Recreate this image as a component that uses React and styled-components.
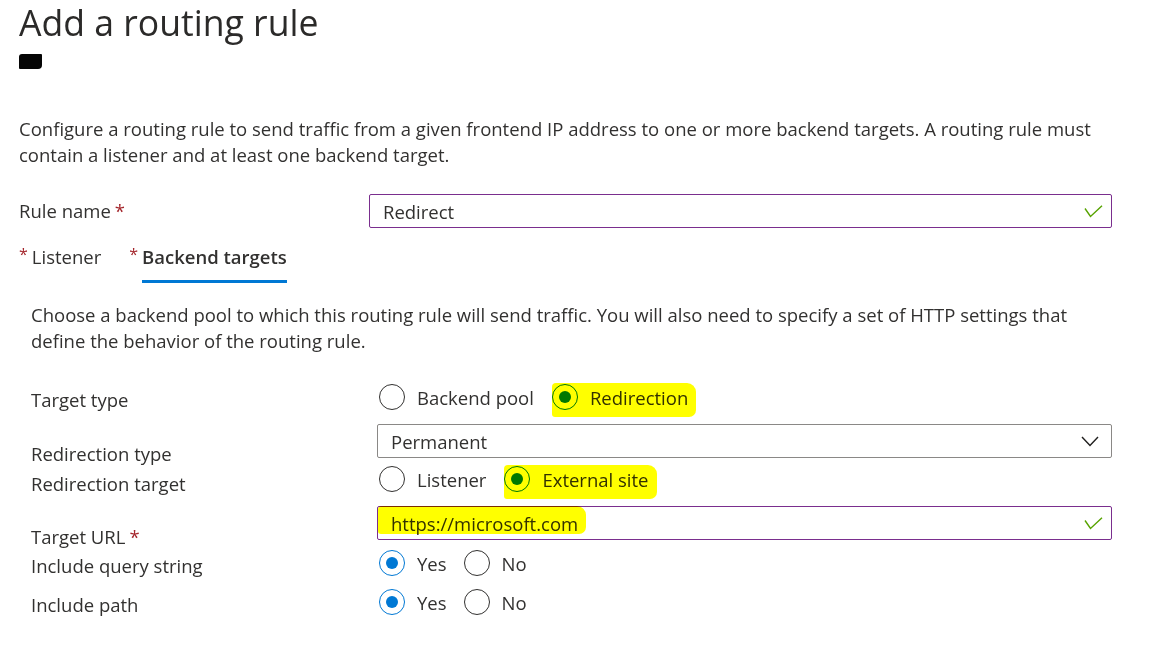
import React from 'react'
import styled, { createGlobalStyle } from 'styled-components'

const GlobalStyle = createGlobalStyle`
  body {
    margin: 0;
    background: #ffffff;
    font-family: "Open Sans", "Noto Sans", "Liberation Sans", sans-serif;
    color: #323130;
  }
`

const Page = styled.div`
  width: 1093px;
  padding: 0 0 0 19px;
`

const Title = styled.h1`
  margin: 0;
  font-size: 35.6px;
  line-height: 44px;
  font-weight: 400;
  color: #2b2a29;
`

const Redacted = styled.div`
  width: 23px;
  height: 15px;
  margin-top: 10px;
  background: #050505;
  border-radius: 3px 1px 4px 1px;
`

const Text = styled.p`
  margin: ${(p) => p.$top}px 0 0;
  font-size: 18.5px;
  line-height: 26px;
  white-space: nowrap;
`

const FieldRow = styled.div`
  display: grid;
  grid-template-columns: ${(p) => p.$label}px 1fr;
  align-items: center;
  margin-top: ${(p) => p.$top}px;
`

const Label = styled.div`
  font-size: 18.5px;
  line-height: 26px;
  margin-top: ${(p) => p.$top || 0}px;
`

const Required = styled.span`
  color: #a4262c;
  padding-left: 4px;
`

const Input = styled.div`
  position: relative;
  display: flex;
  align-items: center;
  justify-content: space-between;
  height: 34px;
  box-sizing: border-box;
  margin-top: ${(p) => p.$top || 0}px;
  border: 1px solid ${(p) => (p.$valid ? '#7a2e8e' : '#8a8886')};
  border-radius: 2px;
  padding: 0 ${(p) => p.$pr}px 0 ${(p) => p.$pl}px;
  font-size: 18.5px;
`

const Tabs = styled.div`
  display: flex;
  gap: 28px;
  margin-top: 16px;
  font-size: 18.5px;
  line-height: 26px;
`

const Tab = styled.div`
  display: flex;
  align-items: flex-start;
`

const TabStar = styled.span`
  color: #a4262c;
  font-size: 16px;
  line-height: 20px;
  padding-right: 4px;
`

const TabText = styled.span`
  font-weight: ${(p) => (p.$active ? 600 : 400)};
  padding-bottom: 10px;
  border-bottom: 3px solid ${(p) => (p.$active ? '#0078d4' : 'transparent')};
`

const Section = styled.div`
  padding-left: 12px;
`

const Form = styled.div`
  display: grid;
  grid-template-columns: 346px 1fr;
  margin-top: 30px;
`

const Labels = styled.div`
  display: flex;
  flex-direction: column;
  padding-top: 3px;
`

const Controls = styled.div`
  display: flex;
  flex-direction: column;
`

const Group = styled.div`
  display: flex;
  align-items: center;
  gap: ${(p) => p.$gap || 18}px;
  height: 26px;
  padding-left: 2px;
  margin-top: ${(p) => p.$top || 0}px;
`

const Option = styled.label`
  position: relative;
  display: flex;
  align-items: center;
  gap: 12px;
  font-size: 18.5px;
`

const Circle = styled.span`
  position: relative;
  width: 26px;
  height: 26px;
  box-sizing: border-box;
  border-radius: 50%;
  border: 1px solid ${(p) => (p.$checked ? '#0078d4' : '#323130')};

  &::after {
    content: '';
    display: ${(p) => (p.$checked ? 'block' : 'none')};
    position: absolute;
    top: 6px;
    left: 6px;
    width: 12px;
    height: 12px;
    border-radius: 50%;
    background: #0078d4;
  }
`

const Marker = styled.span`
  position: absolute;
  top: ${(p) => p.$t}px;
  bottom: ${(p) => p.$b}px;
  left: ${(p) => p.$l}px;
  right: ${(p) => p.$r}px;
  background: #ffff00;
  mix-blend-mode: multiply;
  border-radius: 4px 9px 7px 3px;
  pointer-events: none;
`

const UrlMarker = styled(Marker)`
  right: auto;
  width: 208px;
`

const Check = () => (
  <svg width="19" height="13" viewBox="0 0 19 13" fill="none">
    <path d="M1 3.5 L6.5 11.5 L18 0.8" stroke="#57a300" strokeWidth="1.4" />
  </svg>
)

const Chevron = () => (
  <svg width="18" height="11" viewBox="0 0 18 11" fill="none">
    <path d="M1 1 L9 9.5 L17 1" stroke="#201f1e" strokeWidth="1.4" />
  </svg>
)

const Radio = ({ label, checked, mark }) => (
  <Option>
    <Circle $checked={checked} />
    {label}
    {mark && <Marker $t={-1} $b={-7} $l={0} $r={-8} />}
  </Option>
)

export default function App() {
  return (
    <>
      <GlobalStyle />
      <Page>
        <Title>Add a routing rule</Title>
        <Redacted />
        <Text $top={47}>
          Configure a routing rule to send traffic from a given frontend IP address to one or more backend targets. A routing rule must
          <br />
          contain a listener and at least one backend target.
        </Text>

        <FieldRow $label={350} $top={26}>
          <Label>
            Rule name<Required>*</Required>
          </Label>
          <Input $valid $pl={13} $pr={8}>
            Redirect
            <Check />
          </Input>
        </FieldRow>

        <Tabs>
          <Tab>
            <TabStar>*</TabStar>
            <TabText>Listener</TabText>
          </Tab>
          <Tab>
            <TabStar>*</TabStar>
            <TabText $active>Backend targets</TabText>
          </Tab>
        </Tabs>

        <Section>
          <Text $top={19}>
            Choose a backend pool to which this routing rule will send traffic. You will also need to specify a set of HTTP settings that
            <br />
            define the behavior of the routing rule.
          </Text>

          <Form>
            <Labels>
              <Label>Target type</Label>
              <Label $top={28}>Redirection type</Label>
              <Label $top={4}>Redirection target</Label>
              <Label $top={27}>
                Target URL<Required>*</Required>
              </Label>
              <Label $top={3}>Include query string</Label>
              <Label $top={13}>Include path</Label>
            </Labels>

            <Controls>
              <Group>
                <Radio label="Backend pool" />
                <Radio label="Redirection" checked mark />
              </Group>
              <Input $top={14} $pl={13} $pr={12}>
                Permanent
                <Chevron />
              </Input>
              <Group $top={8}>
                <Radio label="Listener" />
                <Radio label="External site" checked mark />
              </Group>
              <Input $valid $top={14} $pl={13} $pr={8}>
                https://microsoft.com
                <Check />
                <UrlMarker $t={-1} $b={5} $l={0} />
              </Input>
              <Group $top={10} $gap={17}>
                <Radio label="Yes" checked />
                <Radio label="No" />
              </Group>
              <Group $top={13} $gap={17}>
                <Radio label="Yes" checked />
                <Radio label="No" />
              </Group>
            </Controls>
          </Form>
        </Section>
      </Page>
    </>
  )
}
